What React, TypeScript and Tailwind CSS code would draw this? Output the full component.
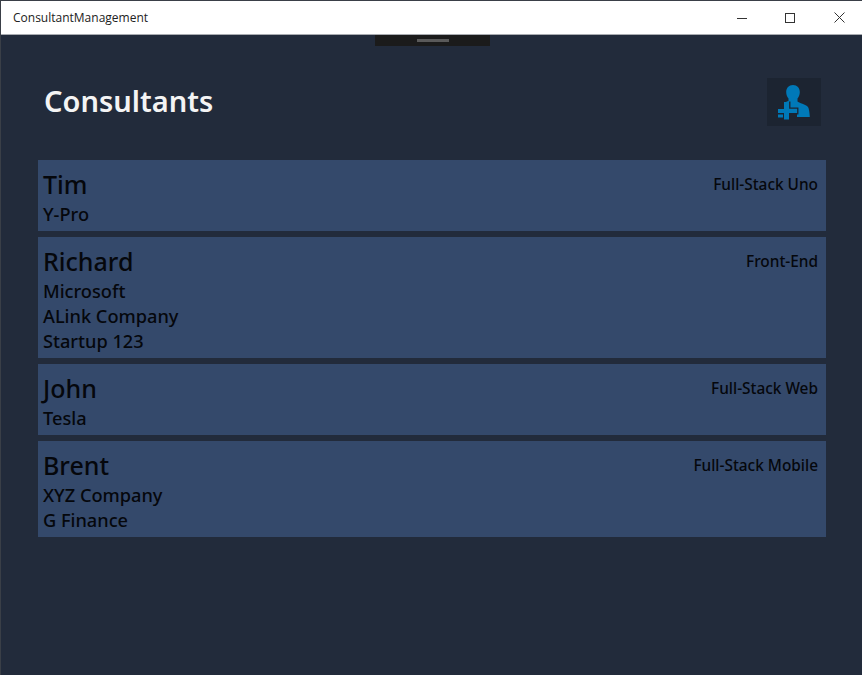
import React from 'react';

const consultants = [
  { name: 'Tim', role: 'Full-Stack Uno', companies: ['Y-Pro'] },
  { name: 'Richard', role: 'Front-End', companies: ['Microsoft', 'ALink Company', 'Startup 123'] },
  { name: 'John', role: 'Full-Stack Web', companies: ['Tesla'] },
  { name: 'Brent', role: 'Full-Stack Mobile', companies: ['XYZ Company', 'G Finance'] },
];

const AddUserIcon = () => (
  <svg width="34" height="35" viewBox="0 0 34 35" fill="#0079b8">
    <path d="M16 0c4.200 0 6.800 3 6.800 7 0 2.800-1 5-2.300 6.500v3c1.200 1.500 8.500 2.800 10.500 5.500 1 1.500 1.500 5 1.800 10H20v-4h-8v-6h-2.500v-5.500l2-.5v-2.500c-1.300-1.500-2.300-3.700-2.300-6.500C9.200 3 11.800 0 16 0z" />
    <path d="M7 17h5v7h8v4h-8v6.500H7V28H1v-4h6z" />
    <path d="M1 29.500h5v3H1z" />
    <path d="M12.800 16.500v6.700h8v5.600h-8" fill="none" stroke="#1c2431" strokeWidth="1.300" />
  </svg>
);

export default function App() {
  return (
    <div className="w-[862px] h-[675px] flex flex-col overflow-hidden bg-[#222b3b] border-l border-t border-[#3a3f47] font-['Noto_Sans','Open_Sans',sans-serif]">
      <div className="h-[34px] shrink-0 bg-white border-b border-[#a9acb1] flex items-center justify-between">
        <span className="pl-3 text-[12px] text-[#222] font-['Open_Sans',sans-serif]">ConsultantManagement</span>
        <div className="flex items-center h-full">
          <div className="w-[44px] flex justify-center">
            <svg width="10" height="10" viewBox="0 0 10 10" stroke="#333" fill="none"><path d="M0 5.500h10" /></svg>
          </div>
          <div className="w-[52px] flex justify-center">
            <svg width="10" height="10" viewBox="0 0 10 10" stroke="#333" fill="none"><rect x="0.500" y="0.500" width="9" height="9" /></svg>
          </div>
          <div className="w-[46px] flex justify-center">
            <svg width="11" height="11" viewBox="0 0 11 11" stroke="#333" fill="none"><path d="M0.500 0.500l10 10M10.500 0.500l-10 10" /></svg>
          </div>
        </div>
      </div>

      <div className="relative flex-1 px-[37px]">
        <div className="absolute left-[374px] top-0 w-[115px] h-[11px] bg-[#1b1b1b] flex items-center justify-center">
          <div className="w-8 h-[3px] bg-[#5a5a5a]" />
        </div>

        <div className="h-[125px] flex items-start justify-between pt-[43px] pl-[6px] pr-[4px]">
          <h1 className="text-[29px] leading-[46px] font-semibold text-[#f4f4f4]">Consultants</h1>
          <button className="w-[54px] h-[48px] bg-[#1c2431] flex items-center justify-center">
            <AddUserIcon />
          </button>
        </div>

        <div className="flex flex-col gap-[6px] w-[788px]">
          {consultants.map((c) => (
            <div key={c.name} className="bg-[#34496b] flex justify-between pl-[5px] pr-[8px] pt-[6px] pb-[4px] text-[#05070c]">
              <div>
                <div className="text-[25px] leading-[36px] font-medium">{c.name}</div>
                {c.companies.map((co) => (
                  <div key={co} className="text-[18.200px] leading-[25px] font-medium">{co}</div>
                ))}
              </div>
              <div className="text-[15.400px] leading-[24px] pt-[6.500px] font-medium">{c.role}</div>
            </div>
          ))}
        </div>
      </div>
    </div>
  );
}
